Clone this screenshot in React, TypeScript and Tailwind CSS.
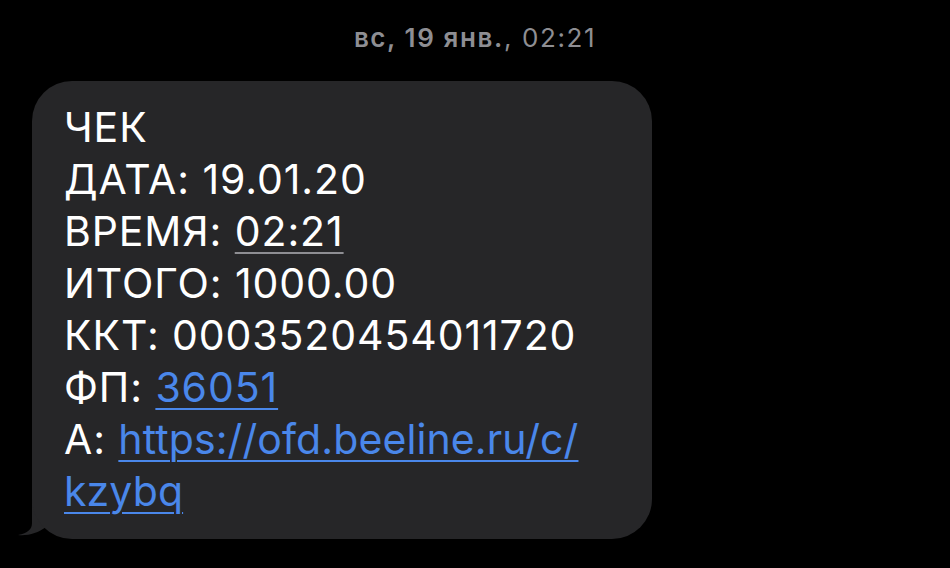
import React from 'react';

const font = { fontFamily: 'Inter, "Liberation Sans", sans-serif' };

export default function App() {
  return (
    <div className="w-[950px] h-[568px] bg-black overflow-hidden" style={font}>
      <p className="pt-[23px] text-center text-[26px] leading-[30px] tracking-[1.6px] text-[#8e8e93]">
        <span className="font-semibold">вс, 19 янв.</span>, 02:21
      </p>
      <div className="mt-[28px] ml-[32px] relative w-[620px]">
        <div className="relative z-10 bg-[#262628] rounded-[40px] pl-[32px] pt-[20px] pb-[22px] text-white text-[41px] leading-[52px] tracking-[0.9px]">
          <div>ЧЕК</div>
          <div>ДАТА: 19.01.20</div>
          <div>
            ВРЕМЯ: <span className="underline decoration-[#8e8e93] decoration-2 underline-offset-[6px]">02:21</span>
          </div>
          <div>ИТОГО: 1000.00</div>
          <div>ККТ: 0003520454011720</div>
          <div>
            ФП: <span className="text-[#4a87ea] underline decoration-2 underline-offset-[6px]">36051</span>
          </div>
          <div>
            А: <span className="text-[#4a87ea] underline decoration-2 underline-offset-[6px] tracking-[0.1px]">https://ofd.beeline.ru/c/<br />kzybq</span>
          </div>
        </div>
        <svg className="absolute left-[-14px] bottom-[2px] z-0" width="44" height="48" viewBox="0 0 44 48">
          <path d="M14 0 L14 34 C14 40 10 44 0 46 C10 47 20 44 28 38 L44 38 L44 0 Z" fill="#262628" />
        </svg>
      </div>
    </div>
  );
}
